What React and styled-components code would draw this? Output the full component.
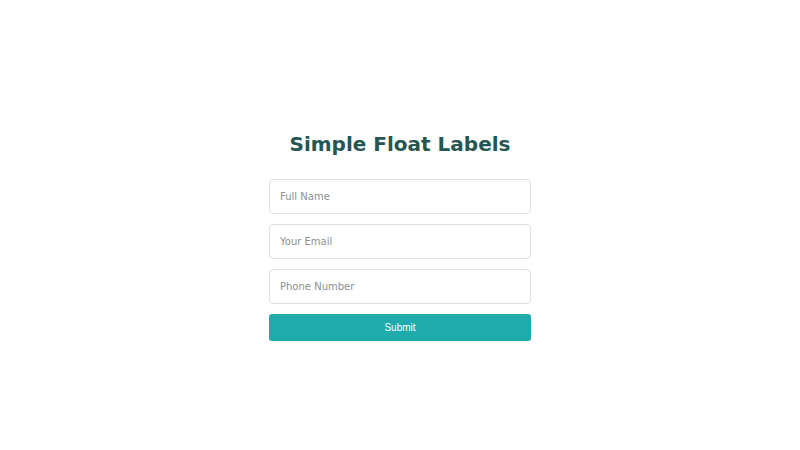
import React from "react";
import styled, { createGlobalStyle } from "styled-components";

const Global = createGlobalStyle`
  * { box-sizing: border-box; }
  html, body { margin: 0; padding: 0; background: #fff; }
  body { font-family: "DejaVu Sans", sans-serif; }
`;

const Page = styled.div`
  display: flex;
  justify-content: center;
  padding-top: 132px;
`;

const Form = styled.form`
  width: 262px;
  display: flex;
  flex-direction: column;
  gap: 10px;
`;

const Title = styled.h1`
  margin: 0 -40px 13px;
  font-family: "DejaVu Sans", sans-serif;
  font-weight: bold;
  font-size: 20px;
  line-height: 24px;
  color: #245753;
  text-align: center;
`;

const Input = styled.input`
  width: 100%;
  height: 35px;
  margin: 0;
  padding: 0 10px;
  border: 1px solid #e0e0e0;
  border-radius: 4px;
  font-family: "DejaVu Sans", sans-serif;
  font-size: 10px;
  color: #333;
  outline: none;
  &::placeholder { color: #8c9090; }
`;

const Button = styled.button`
  width: 100%;
  height: 27px;
  border: none;
  border-radius: 3px;
  background: #1fabab;
  color: #fff;
  font-family: "Liberation Sans", Arial, sans-serif;
  font-size: 10px;
  cursor: pointer;
`;

export default function App() {
  return (
    <>
      <Global />
      <Page>
        <Form onSubmit={(e) => e.preventDefault()}>
          <Title>Simple Float Labels</Title>
          <Input type="text" placeholder="Full Name" />
          <Input type="email" placeholder="Your Email" />
          <Input type="tel" placeholder="Phone Number" />
          <Button type="submit">Submit</Button>
        </Form>
      </Page>
    </>
  );
}
